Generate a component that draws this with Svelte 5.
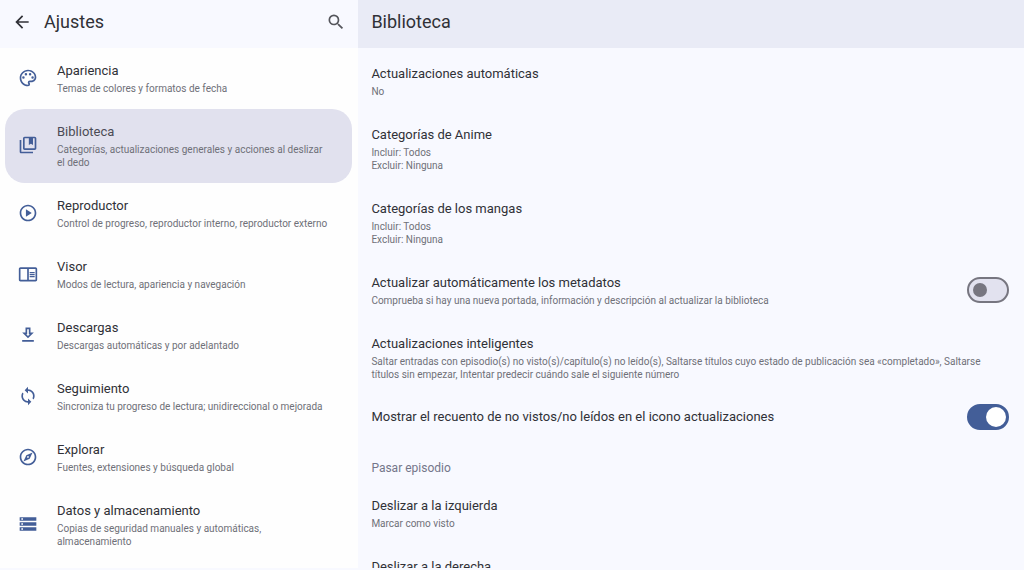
<script lang="ts">
type Category = { id: string; title: string; subtitle: string };
type Preference = { title: string; subtitle?: string[]; toggle?: 'metadata' | 'badge' };

const categories: Category[] = [
	{ id: 'appearance', title: 'Apariencia', subtitle: 'Temas de colores y formatos de fecha' },
	{
		id: 'library',
		title: 'Biblioteca',
		subtitle: 'Categorías, actualizaciones generales y acciones al deslizar el dedo',
	},
	{
		id: 'player',
		title: 'Reproductor',
		subtitle: 'Control de progreso, reproductor interno, reproductor externo',
	},
	{ id: 'reader', title: 'Visor', subtitle: 'Modos de lectura, apariencia y navegación' },
	{ id: 'downloads', title: 'Descargas', subtitle: 'Descargas automáticas y por adelantado' },
	{
		id: 'tracking',
		title: 'Seguimiento',
		subtitle: 'Sincroniza tu progreso de lectura; unidireccional o mejorada',
	},
	{ id: 'browse', title: 'Explorar', subtitle: 'Fuentes, extensiones y búsqueda global' },
	{
		id: 'storage',
		title: 'Datos y almacenamiento',
		subtitle: 'Copias de seguridad manuales y automáticas, almacenamiento',
	},
];

const updatePreferences: Preference[] = [
	{ title: 'Actualizaciones automáticas', subtitle: ['No'] },
	{ title: 'Categorías de Anime', subtitle: ['Incluir: Todos', 'Excluir: Ninguna'] },
	{ title: 'Categorías de los mangas', subtitle: ['Incluir: Todos', 'Excluir: Ninguna'] },
	{
		title: 'Actualizar automáticamente los metadatos',
		subtitle: [
			'Comprueba si hay una nueva portada, información y descripción al actualizar la biblioteca',
		],
		toggle: 'metadata',
	},
	{
		title: 'Actualizaciones inteligentes',
		subtitle: [
			'Saltar entradas con episodio(s) no visto(s)/capítulo(s) no leído(s), Saltarse títulos cuyo estado de publicación sea «completado», Saltarse títulos sin empezar, Intentar predecir cuándo sale el siguiente número',
		],
	},
	{
		title: 'Mostrar el recuento de no vistos/no leídos en el icono actualizaciones',
		toggle: 'badge',
	},
];

const swipePreferences: Preference[] = [
	{ title: 'Deslizar a la izquierda', subtitle: ['Marcar como visto'] },
	{ title: 'Deslizar a la derecha' },
];

// 24x24 outlines
const icons: Record<string, string> = {
	appearance:
		'M12 22C6.49 22 2 17.51 2 12S6.49 2 12 2s10 4.04 10 9c0 3.31-2.69 6-6 6h-1.77c-.28 0-.5.22-.5.5 0 .12.05.23.13.33.41.47.64 1.06.64 1.67A2.5 2.5 0 0 1 12 22zm0-18c-4.41 0-8 3.59-8 8s3.59 8 8 8c.28 0 .5-.22.5-.5a.54.54 0 0 0-.14-.35c-.41-.46-.63-1.05-.63-1.65a2.5 2.5 0 0 1 2.5-2.5H16c2.21 0 4-1.79 4-4 0-3.86-3.59-7-8-7zM5 11.5a1.5 1.5 0 1 0 3 0 1.5 1.5 0 1 0-3 0zM8 7.5a1.5 1.5 0 1 0 3 0 1.5 1.5 0 1 0-3 0zM13 7.5a1.5 1.5 0 1 0 3 0 1.5 1.5 0 1 0-3 0zM16 11.5a1.5 1.5 0 1 0 3 0 1.5 1.5 0 1 0-3 0z',
	library:
		'M4 6H2v14c0 1.1.9 2 2 2h14v-2H4V6zM20 2H8c-1.1 0-2 .9-2 2v12c0 1.1.9 2 2 2h12c1.1 0 2-.9 2-2V4c0-1.1-.9-2-2-2zm0 14H8V4h5v8l2.5-1.5L18 12V4h2v12z',
	player:
		'M12 2C6.48 2 2 6.48 2 12s4.48 10 10 10 10-4.48 10-10S17.52 2 12 2zm0 18c-4.41 0-8-3.59-8-8s3.59-8 8-8 8 3.59 8 8-3.59 8-8 8zM9.500 16.5l7-4.5-7-4.5z',
	reader:
		'M21 4H3c-1.1 0-2 .9-2 2v13c0 1.1.9 2 2 2h18c1.1 0 2-.9 2-2V6c0-1.1-.9-2-2-2zM3 19V6h8v13H3zm18 0h-8V6h8v13zM14 9.500h6V11h-6zM14 12h6v1.5h-6zM14 14.500h6V16h-6z',
	downloads: 'M19 9h-4V3H9v6H5l7 7 7-7zm-8 2V5h2v6h1.17L12 13.17 9.83 11H11zM5 18h14v2H5z',
	tracking:
		'M12 4V1L8 5l4 4V6c3.31 0 6 2.69 6 6 0 1.01-.25 1.97-.7 2.8l1.46 1.46A7.93 7.93 0 0 0 20 12c0-4.42-3.58-8-8-8zm0 14c-3.31 0-6-2.69-6-6 0-1.01.25-1.97.7-2.8L5.24 7.74A7.93 7.93 0 0 0 4 12c0 4.42 3.58 8 8 8v3l4-4-4-4v3z',
	browse:
		'M12 2C6.48 2 2 6.48 2 12s4.48 10 10 10 10-4.48 10-10S17.52 2 12 2zm0 18c-4.41 0-8-3.59-8-8s3.59-8 8-8 8 3.59 8 8-3.59 8-8 8zM6.5 17.5l7.51-3.49L17.5 6.5 9.99 9.99 6.5 17.5zm5.5-6.6c.61 0 1.1.49 1.1 1.1s-.49 1.1-1.1 1.1-1.1-.49-1.1-1.1.49-1.1 1.1-1.1z',
	storage:
		'M2 20h20v-4H2v4zm2-3h2v2H4v-2zM2 4v4h20V4H2zm4 3H4V5h2v2zm-4 7h20v-4H2v4zm2-3h2v2H4v-2z',
	back: 'M20 11H7.83l5.59-5.59L12 4l-8 8 8 8 1.41-1.41L7.83 13H20v-2z',
	search:
		'M15.5 14h-.79l-.28-.27A6.47 6.47 0 0 0 16 9.5 6.5 6.5 0 1 0 9.5 16c1.61 0 3.09-.59 4.23-1.57l.27.28v.79l5 4.99L20.49 19l-4.99-5zm-6 0C7.01 14 5 11.99 5 9.5S7.01 5 9.5 5 14 7.01 14 9.5 11.99 14 9.5 14z',
};

let selected = $state('library');
let toggles = $state({ metadata: false, badge: true });
</script>

{#snippet icon(name: string)}
	<svg class="icon" viewBox="0 0 24 24" aria-hidden="true">
		<path d={icons[name]} fill-rule="evenodd" />
	</svg>
{/snippet}

{#snippet copy(pref: Preference)}
	<span class="copy">
		<span class="title">{pref.title}</span>
		{#each pref.subtitle ?? [] as line}
			<span class="subtitle">{line}</span>
		{/each}
	</span>
{/snippet}

{#snippet preference(pref: Preference)}
	{#if pref.toggle}
		<label class="preference" class:compact={!pref.subtitle}>
			{@render copy(pref)}
			<input class="switch" type="checkbox" role="switch" bind:checked={toggles[pref.toggle]} />
		</label>
	{:else}
		<button class="preference" type="button">{@render copy(pref)}</button>
	{/if}
{/snippet}

<div class="settings">
	<aside class="pane sidebar">
		<header class="bar">
			<button class="bar-action" type="button" aria-label="Atrás">{@render icon('back')}</button>
			<h1>Ajustes</h1>
			<button class="bar-action search" type="button" aria-label="Buscar">
				{@render icon('search')}
			</button>
		</header>
		<nav>
			{#each categories as category (category.id)}
				<button
					class="category"
					class:selected={selected === category.id}
					type="button"
					aria-current={selected === category.id}
					onclick={() => (selected = category.id)}
				>
					{@render icon(category.id)}
					<span class="copy">
						<span class="title">{category.title}</span>
						<span class="subtitle">{category.subtitle}</span>
					</span>
				</button>
			{/each}
		</nav>
	</aside>

	<main class="pane detail">
		<header class="bar">
			<h2>Biblioteca</h2>
		</header>
		<div class="preferences">
			{#each updatePreferences as pref}
				{@render preference(pref)}
			{/each}
			<h3>Pasar episodio</h3>
			{#each swipePreferences as pref}
				{@render preference(pref)}
			{/each}
		</div>
	</main>
</div>

<style>
	:global(body) {
		margin: 0;
	}

	.settings {
		--primary: #435e98;
		--surface: #f8f9ff;
		--text: #303137;
		--text-muted: #6f7078;
		box-sizing: border-box;
		display: grid;
		grid-template-columns: 35fr 65fr;
		height: 100vh;
		padding-bottom: 2px;
		overflow: hidden;
		background: var(--surface);
		color: var(--text);
		font-family: Roboto, sans-serif;
	}

	.pane {
		display: flex;
		flex-direction: column;
		min-width: 0;
		min-height: 0;
		overflow: hidden;
	}

	.sidebar {
		background: #fefefe;
	}

	.bar {
		display: flex;
		flex: none;
		align-items: center;
		box-sizing: border-box;
		height: 48px;
		background: var(--surface);
	}

	.sidebar .bar {
		gap: 12px;
		padding: 0 12px 4px;
	}

	.sidebar h1 {
		flex: 1;
	}

	.detail .bar {
		padding: 0 13px 4px;
		background: #e9ebf6;
	}

	h1,
	h2 {
		margin: 0;
		font-size: 18px;
		font-weight: 400;
		line-height: 24px;
	}

	button {
		border: 0;
		background: none;
		color: inherit;
		font: inherit;
		text-align: left;
		cursor: pointer;
	}

	.bar-action {
		display: grid;
		padding: 0;
	}

	.search {
		color: #55565c;
	}

	.icon {
		flex: none;
		width: 20px;
		height: 20px;
		fill: currentColor;
	}

	.category {
		display: flex;
		align-items: center;
		gap: 19px;
		box-sizing: border-box;
		width: calc(100% - 11px);
		margin: 0 6px 0 5px;
		padding: 12px 22px 14px 13px;
		border-radius: 20px;
	}

	.category .icon {
		color: var(--primary);
	}

	.category.selected {
		background: #e1e1ee;
	}

	.category.selected .title {
		color: #4b4b55;
	}

	.copy {
		display: flex;
		flex: 1;
		flex-direction: column;
		min-width: 0;
	}

	.title {
		font-size: 13px;
		line-height: 22px;
	}

	.subtitle {
		color: var(--text-muted);
		font-size: 10px;
		line-height: 13px;
	}

	.preferences {
		display: flex;
		flex-direction: column;
		padding-top: 2px;
	}

	.preference {
		display: flex;
		flex: none;
		align-items: center;
		gap: 13px;
		padding: 13px 15px 13px 13px;
		cursor: pointer;
	}

	.preference.compact {
		padding-block: 10px;
	}

	h3 {
		margin: 0;
		padding: 18px 13px 4px;
		color: #74768a;
		font-size: 12px;
		font-weight: 400;
		line-height: 20px;
	}

	.switch {
		position: relative;
		flex: none;
		box-sizing: border-box;
		width: 42px;
		height: 26px;
		margin: 0;
		border: 2px solid #777680;
		border-radius: 13px;
		background: #e2e2ef;
		appearance: none;
		cursor: pointer;
	}

	.switch::before {
		content: '';
		position: absolute;
		top: 4px;
		left: 4px;
		width: 14px;
		height: 14px;
		border-radius: 50%;
		background: #777680;
	}

	.switch:checked {
		border-color: var(--primary);
		background: var(--primary);
	}

	.switch:checked::before {
		top: 1px;
		left: 17px;
		width: 20px;
		height: 20px;
		background: #fff;
	}
</style>
